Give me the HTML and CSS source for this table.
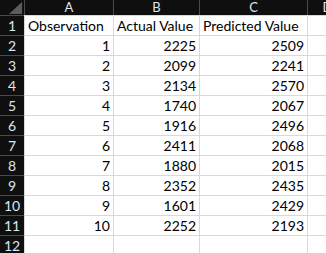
FILE: index.html
```html
<!DOCTYPE html>
<html>
<head>
<meta charset="utf-8">
<link rel="stylesheet" href="styles.css">
</head>
<body>
<div class="sheet">
  <div class="corner"><span class="tri"></span></div>
  <div class="colh">A</div>
  <div class="colh">B</div>
  <div class="colh">C</div>
  <div class="colh">D</div>

  <div class="rowh">1</div>
  <div class="cell">Observation</div>
  <div class="cell">Actual Value</div>
  <div class="cell">Predicted Value</div>
  <div class="cell"></div>

  <div class="rowh">2</div><div class="cell num">1</div><div class="cell num">2225</div><div class="cell num">2509</div><div class="cell"></div>
  <div class="rowh">3</div><div class="cell num">2</div><div class="cell num">2099</div><div class="cell num">2241</div><div class="cell"></div>
  <div class="rowh">4</div><div class="cell num">3</div><div class="cell num">2134</div><div class="cell num">2570</div><div class="cell"></div>
  <div class="rowh">5</div><div class="cell num">4</div><div class="cell num">1740</div><div class="cell num">2067</div><div class="cell"></div>
  <div class="rowh">6</div><div class="cell num">5</div><div class="cell num">1916</div><div class="cell num">2496</div><div class="cell"></div>
  <div class="rowh">7</div><div class="cell num">6</div><div class="cell num">2411</div><div class="cell num">2068</div><div class="cell"></div>
  <div class="rowh">8</div><div class="cell num">7</div><div class="cell num">1880</div><div class="cell num">2015</div><div class="cell"></div>
  <div class="rowh">9</div><div class="cell num">8</div><div class="cell num">2352</div><div class="cell num">2435</div><div class="cell"></div>
  <div class="rowh">10</div><div class="cell num">9</div><div class="cell num">1601</div><div class="cell num">2429</div><div class="cell"></div>
  <div class="rowh">11</div><div class="cell num">10</div><div class="cell num">2252</div><div class="cell num">2193</div><div class="cell"></div>
  <div class="rowh">12</div><div class="cell"></div><div class="cell"></div><div class="cell"></div><div class="cell"></div>
</div>
</body>
</html>
```

FILE: styles.css
```css
html, body {
  margin: 0;
  padding: 0;
  background: #ffffff;
  overflow: hidden;
}

.sheet {
  display: grid;
  grid-template-columns: 24px 89px 86px 108px 40px;
  grid-template-rows: 15px repeat(12, 20px);
  font-family: Lato, "Liberation Sans", sans-serif;
  font-size: 14px;
  color: #000000;
}

.corner {
  background: #0f0f0f;
  position: relative;
}

.tri {
  position: absolute;
  right: 2px;
  bottom: 1px;
  width: 0;
  height: 0;
  border-left: 13px solid transparent;
  border-bottom: 12px solid #5c5c5c;
}

.colh {
  background: #0f0f0f;
  color: #dce6f2;
  border-left: 1px solid #4a4a4a;
  display: flex;
  align-items: center;
  justify-content: center;
  font-size: 13px;
  line-height: 15px;
}

.rowh {
  background: #0f0f0f;
  color: #dce6f2;
  border-top: 1px solid #4a4a4a;
  display: flex;
  align-items: center;
  justify-content: center;
  font-size: 14px;
}

.cell {
  box-sizing: border-box;
  border-left: 1px solid #d9d9d9;
  border-top: 1px solid #d9d9d9;
  display: flex;
  align-items: flex-end;
  padding: 0 3px 1px 3px;
  white-space: nowrap;
  overflow: hidden;
  line-height: 17px;
}

.num {
  justify-content: flex-end;
}
```
